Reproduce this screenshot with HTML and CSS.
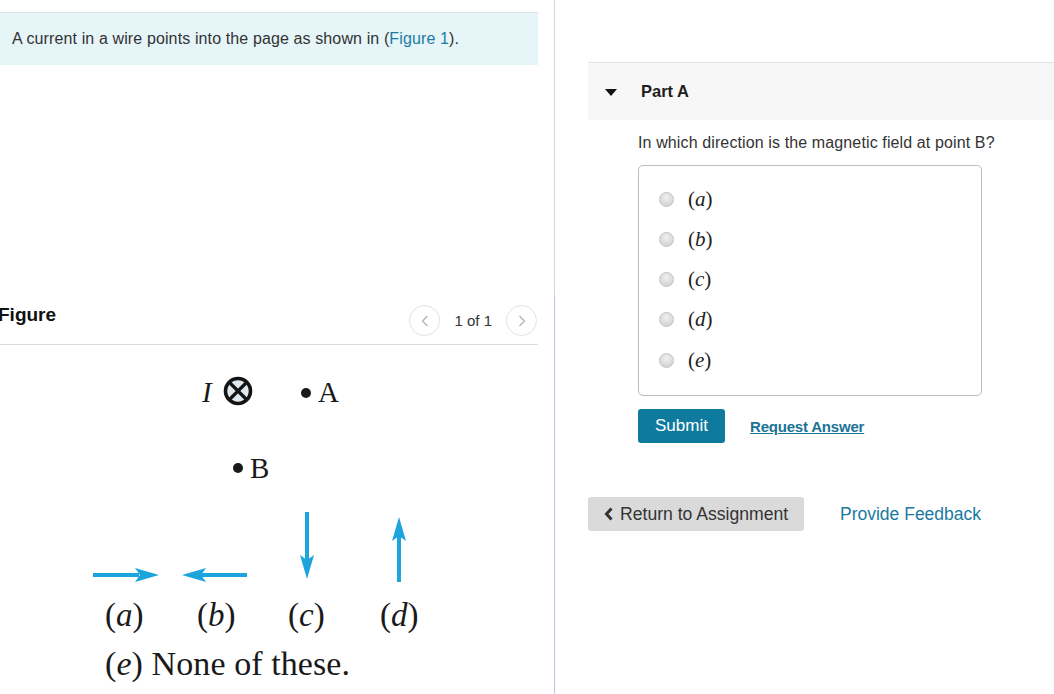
FILE: index.html
```html
<!DOCTYPE html>
<html>
<head>
<meta charset="utf-8">
<link rel="stylesheet" href="styles.css">
</head>
<body>
<div class="page">
  <div class="left">
    <div class="intro">A current in a wire points into the page as shown in (<a class="link" href="#">Figure 1</a>).</div>
    <div class="fig-head">
      <h2 class="fig-title">Figure</h2>
      <div class="pager">
        <span class="pbtn"><svg width="8" height="12" viewBox="0 0 8 12"><path d="M6.5 1 L1.5 6 L6.5 11" fill="none" stroke="#b5b5b5" stroke-width="1.3"/></svg></span>
        <span class="pcount">1 of 1</span>
        <span class="pbtn"><svg width="8" height="12" viewBox="0 0 8 12"><path d="M1.5 1 L6.5 6 L1.5 11" fill="none" stroke="#b5b5b5" stroke-width="1.3"/></svg></span>
      </div>
    </div>
    <svg class="fig" width="538" height="349" viewBox="0 0 538 349">
      <g font-family="'Liberation Serif', 'Times New Roman', serif" fill="#1a1a1a">
        <text x="202" y="57" font-size="29" font-style="italic">I</text>
        <circle cx="238" cy="46" r="12.5" fill="#dfe8ee" stroke="#141414" stroke-width="3.6"/>
        <path d="M229.5 37.5 L246.5 54.5 M246.5 37.5 L229.5 54.5" stroke="#141414" stroke-width="3.2"/>
        <circle cx="306" cy="48" r="5"/>
        <text x="318" y="57" font-size="29">A</text>
        <circle cx="238" cy="123" r="5"/>
        <text x="250" y="133" font-size="29">B</text>
      </g>
      <g fill="#1da4dc">
        <rect x="93" y="228" width="46" height="4"/>
        <polygon points="159,230 135,223 140,230 135,237"/>
        <rect x="201" y="228" width="46" height="4"/>
        <polygon points="182,230 206,223 201,230 206,237"/>
        <rect x="305" y="167" width="4" height="48"/>
        <polygon points="307,234 300,210 307,215 314,210"/>
        <rect x="397" y="191" width="4" height="46"/>
        <polygon points="399,172 392,196 399,191 406,196"/>
      </g>
      <g font-family="'Liberation Serif', 'Times New Roman', serif" fill="#1a1a1a" font-size="33">
        <text x="105" y="281">(<tspan font-style="italic">a</tspan>)</text>
        <text x="197" y="281">(<tspan font-style="italic">b</tspan>)</text>
        <text x="288" y="281">(<tspan font-style="italic">c</tspan>)</text>
        <text x="380" y="281">(<tspan font-style="italic">d</tspan>)</text>
        <text x="105" y="330" font-size="34" textLength="245">(<tspan font-style="italic">e</tspan>) None of these.</text>
      </g>
    </svg>
  </div>
  <div class="divider"></div>
  <div class="right">
    <div class="part-head">
      <svg class="caret" width="12" height="7" viewBox="0 0 12 7"><polygon points="0,0 12,0 6,7" fill="#111"/></svg>
      <span class="part-title">Part A</span>
    </div>
    <div class="part-body">
      <p class="question">In which direction is the magnetic field at point B?</p>
      <div class="choices">
        <label class="choice"><span class="radio"></span><span class="opt">(<i>a</i>)</span></label>
        <label class="choice"><span class="radio"></span><span class="opt">(<i>b</i>)</span></label>
        <label class="choice"><span class="radio"></span><span class="opt">(<i>c</i>)</span></label>
        <label class="choice"><span class="radio"></span><span class="opt">(<i>d</i>)</span></label>
        <label class="choice"><span class="radio"></span><span class="opt">(<i>e</i>)</span></label>
      </div>
      <div class="actions">
        <button class="submit">Submit</button>
        <a class="request" href="#">Request Answer</a>
      </div>
    </div>
    <div class="nav">
      <button class="return"><svg width="9" height="14" viewBox="0 0 9 14"><path d="M7.5 1.5 L2.5 7 L7.5 12.5" fill="none" stroke="#333" stroke-width="3"/></svg><span>Return to Assignment</span></button>
      <a class="feedback" href="#">Provide Feedback</a>
    </div>
  </div>
</div>
</body>
</html>
```

FILE: styles.css
```css
* { box-sizing: border-box; }
html, body { margin: 0; padding: 0; background: #fff; }
body {
  font-family: "Liberation Sans", Arial, sans-serif;
  color: #333;
  width: 1054px;
  height: 694px;
  overflow: hidden;
}
.page {
  display: flex;
  height: 694px;
}
.left {
  width: 538px;
  flex: none;
  margin-right: 16px;
  padding-top: 12px;
}
.intro {
  background: #e6f5f7;
  border-top: 1px solid #d9e3e5;
  padding: 16px 12px;
  font-size: 16px;
  letter-spacing: 0.12px;
  line-height: 20px;
  color: #333;
}
.link { color: #1c7ba2; text-decoration: none; }
.fig-head {
  margin-top: 231px;
  height: 49px;
  display: flex;
  justify-content: space-between;
  align-items: flex-end;
  border-bottom: 1px solid #dcdcdc;
  padding-bottom: 8px;
}
.fig-title {
  margin: 0 0 10px -2px;
  font-size: 19px;
  line-height: 22px;
  font-weight: bold;
  color: #111;
}
.pager {
  display: flex;
  align-items: center;
  gap: 14px;
  margin-right: 1px;
}
.pbtn {
  width: 31px;
  height: 31px;
  border: 1px solid #e2e2e2;
  border-radius: 50%;
  display: flex;
  align-items: center;
  justify-content: center;
}
.pcount { font-size: 15px; color: #333; line-height: 20px; }
.fig { display: block; }
.divider {
  width: 1px;
  flex: none;
  height: 694px;
  background: linear-gradient(to bottom, #d4d4d4 0, #d4d4d4 295px, #bac7dc 295px, #bac7dc 100%);
}
.right {
  flex: 1;
  padding-left: 33px;
}
.part-head {
  margin-top: 62px;
  height: 58px;
  border-top: 1px solid #e3e3e3;
  background: #f7f7f7;
  display: flex;
  align-items: center;
  padding-left: 17px;
}
.caret { margin-top: 1px; }
.part-title {
  margin-left: 24px;
  font-size: 16.5px;
  font-weight: bold;
  color: #1e1e1e;
  line-height: 20px;
  margin-top: -1px;
}
.part-body { padding-left: 50px; }
.question {
  margin: 13px 0 0;
  font-size: 16px;
  letter-spacing: 0.12px;
  line-height: 20px;
  color: #333;
}
.choices {
  margin-top: 12px;
  width: 344px;
  height: 231px;
  border: 1px solid #bcbcbc;
  border-radius: 5px;
  padding: 13px 0 0 20px;
}
.choice {
  display: flex;
  align-items: center;
  height: 40.25px;
}
.radio {
  width: 15px;
  height: 15px;
  border-radius: 50%;
  border: 1px solid #c4c4c4;
  background: radial-gradient(circle at 50% 35%, #f0f0f0 0, #dcdcdc 55%, #c9c9c9 100%);
  flex: none;
}
.opt {
  margin-left: 14px;
  font-family: "Liberation Serif", "Times New Roman", serif;
  font-size: 21px;
  color: #222;
}
.opt i { font-style: italic; }
.actions {
  margin-top: 13px;
  display: flex;
  align-items: center;
}
.submit {
  width: 87px;
  height: 34px;
  border: none;
  border-radius: 3px;
  background: #0e7b9e;
  color: #fff;
  font-family: "Liberation Sans", Arial, sans-serif;
  font-size: 17px;
  padding: 0;
}
.request {
  margin-left: 25px;
  font-size: 15px;
  font-weight: bold;
  color: #1b7396;
  text-decoration: underline;
  letter-spacing: -0.2px;
}
.nav {
  margin-top: 54px;
  display: flex;
  align-items: center;
}
.return {
  width: 216px;
  height: 34px;
  border: none;
  border-radius: 3px;
  background: #dadada;
  color: #333;
  font-family: "Liberation Sans", Arial, sans-serif;
  font-size: 17.6px;
  display: flex;
  align-items: center;
  padding: 0 0 0 16px;
}
.return span { margin-left: 7px; }
.feedback {
  margin-left: 36px;
  font-size: 17.5px;
  color: #1a7aa0;
  text-decoration: none;
}
```
